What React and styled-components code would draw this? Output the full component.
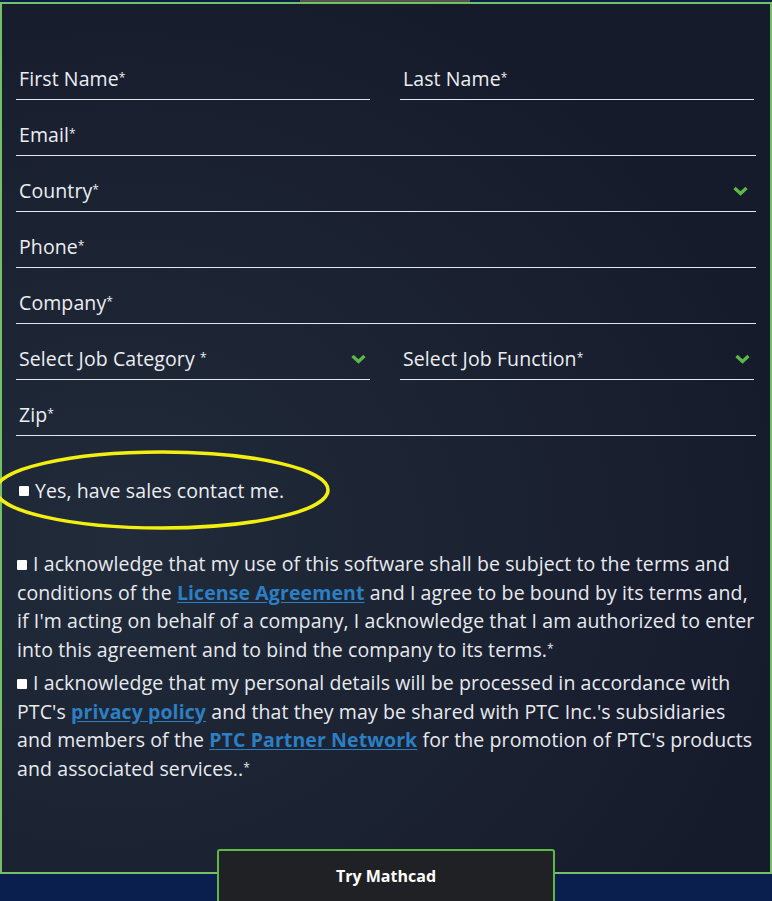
import React from "react";
import styled, { createGlobalStyle } from "styled-components";

const Global = createGlobalStyle`
  html, body {
    margin: 0;
    padding: 0;
    background: #0a1f4d;
  }
  body {
    font-family: "Open Sans", "Lato", sans-serif;
    color: #e8eaee;
  }
`;

const Page = styled.div`
  min-height: 100vh;
  background: #0a1f4d;
  overflow: hidden;
`;

const TopStrip = styled.div`
  height: 2px;
  display: flex;
`;

const TopTab = styled.div`
  margin-left: 300px;
  width: 170px;
  background: #55554f;
`;

const Panel = styled.div`
  box-sizing: border-box;
  border: 2px solid #74c067;
  height: 872px;
  padding: 40px 14px 0 14px;
  background: radial-gradient(ellipse 90% 70% at 15% 62%, #212b3a 0%, #1b2232 55%, #161b2c 100%);
`;

const Row = styled.div`
  display: grid;
  grid-template-columns: ${(p) => (p.$split ? "354px 354px" : "740px")};
  column-gap: 30px;
`;

const Field = styled.div`
  box-sizing: border-box;
  height: 56px;
  border-bottom: 1px solid #e4e6ea;
  display: flex;
  align-items: flex-end;
  justify-content: space-between;
  padding: 0 ${(p) => (p.$wide ? "8px" : "4px")} 8px 3px;
`;

const Label = styled.span`
  font-size: 19.5px;
  line-height: 24px;
  letter-spacing: 0.1px;
  color: #eceef1;
`;

const Req = styled.span`
  font-size: 12px;
  vertical-align: top;
  position: relative;
  top: -1px;
`;

const Chevron = styled.svg`
  width: 15px;
  height: 10px;
  margin-bottom: 7px;
`;

const ContactRow = styled.div`
  position: relative;
  margin-top: 43px;
  display: flex;
  align-items: center;
  padding-left: 3px;
  height: 24px;
`;

const Box = styled.span`
  display: inline-block;
  width: 10px;
  height: 10px;
  background: #ffffff;
  border-radius: 1px;
  margin-right: 6px;
  vertical-align: 1px;
`;

const Ellipse = styled.svg`
  position: absolute;
  left: -39px;
  top: -31px;
  width: 370px;
  height: 84px;
  pointer-events: none;
`;

const Terms = styled.p`
  margin: ${(p) => (p.$first ? "47px" : "4px")} 0 0 1px;
  font-size: 19.5px;
  line-height: 28.7px;
  letter-spacing: 0.1px;
  color: #e8eaee;
  white-space: nowrap;
`;

const Link = styled.a`
  color: #2c7fc3;
  font-weight: 700;
  text-decoration: underline;
  text-underline-offset: 2px;
`;

const Footer = styled.div`
  display: flex;
  justify-content: center;
  margin-top: -25px;
`;

const TryButton = styled.button`
  position: relative;
  width: 338px;
  height: 56px;
  background: #202124;
  border: 2px solid #5cb946;
  border-radius: 3px;
  color: #ffffff;
  font-family: "Open Sans", sans-serif;
  font-weight: 700;
  font-size: 16px;
  padding: 0 0 2px 0;
`;

const ChevronIcon = () => (
  <Chevron viewBox="0 0 15 10">
    <path d="M1.5 2 L7.5 7.5 L13.5 2" fill="none" stroke="#5cb946" strokeWidth="3.2" />
  </Chevron>
);

const Input = ({ label, select, wide }) => (
  <Field $wide={wide}>
    <Label>
      {label}
      <Req>*</Req>
    </Label>
    {select && <ChevronIcon />}
  </Field>
);

export default function App() {
  return (
    <Page>
      <Global />
      <TopStrip>
        <TopTab />
      </TopStrip>
      <Panel>
        <Row $split>
          <Input label="First Name" />
          <Input label="Last Name" />
        </Row>
        <Row>
          <Input label="Email" />
        </Row>
        <Row>
          <Input label="Country" select wide />
        </Row>
        <Row>
          <Input label="Phone" />
        </Row>
        <Row>
          <Input label="Company" />
        </Row>
        <Row $split>
          <Input label="Select Job Category " select />
          <Input label="Select Job Function" select />
        </Row>
        <Row>
          <Input label="Zip" />
        </Row>

        <ContactRow>
          <Box />
          <Label>Yes, have sales contact me.</Label>
          <Ellipse viewBox="0 0 370 84">
            <ellipse cx="185" cy="42" rx="166" ry="38" fill="none" stroke="#f3ef10" strokeWidth="3.5" />
          </Ellipse>
        </ContactRow>

        <Terms $first>
          <Box />I acknowledge that my use of this software shall be subject to the terms and
          <br />
          conditions of the <Link>License Agreement</Link> and I agree to be bound by its terms and,
          <br />
          if I'm acting on behalf of a company, I acknowledge that I am authorized to enter
          <br />
          into this agreement and to bind the company to its terms.<Req>*</Req>
        </Terms>
        <Terms>
          <Box />I acknowledge that my personal details will be processed in accordance with
          <br />
          PTC's <Link>privacy policy</Link> and that they may be shared with PTC Inc.'s subsidiaries
          <br />
          and members of the <Link>PTC Partner Network</Link> for the promotion of PTC's products
          <br />
          and associated services..<Req>*</Req>
        </Terms>
      </Panel>
      <Footer>
        <TryButton>Try Mathcad</TryButton>
      </Footer>
    </Page>
  );
}
